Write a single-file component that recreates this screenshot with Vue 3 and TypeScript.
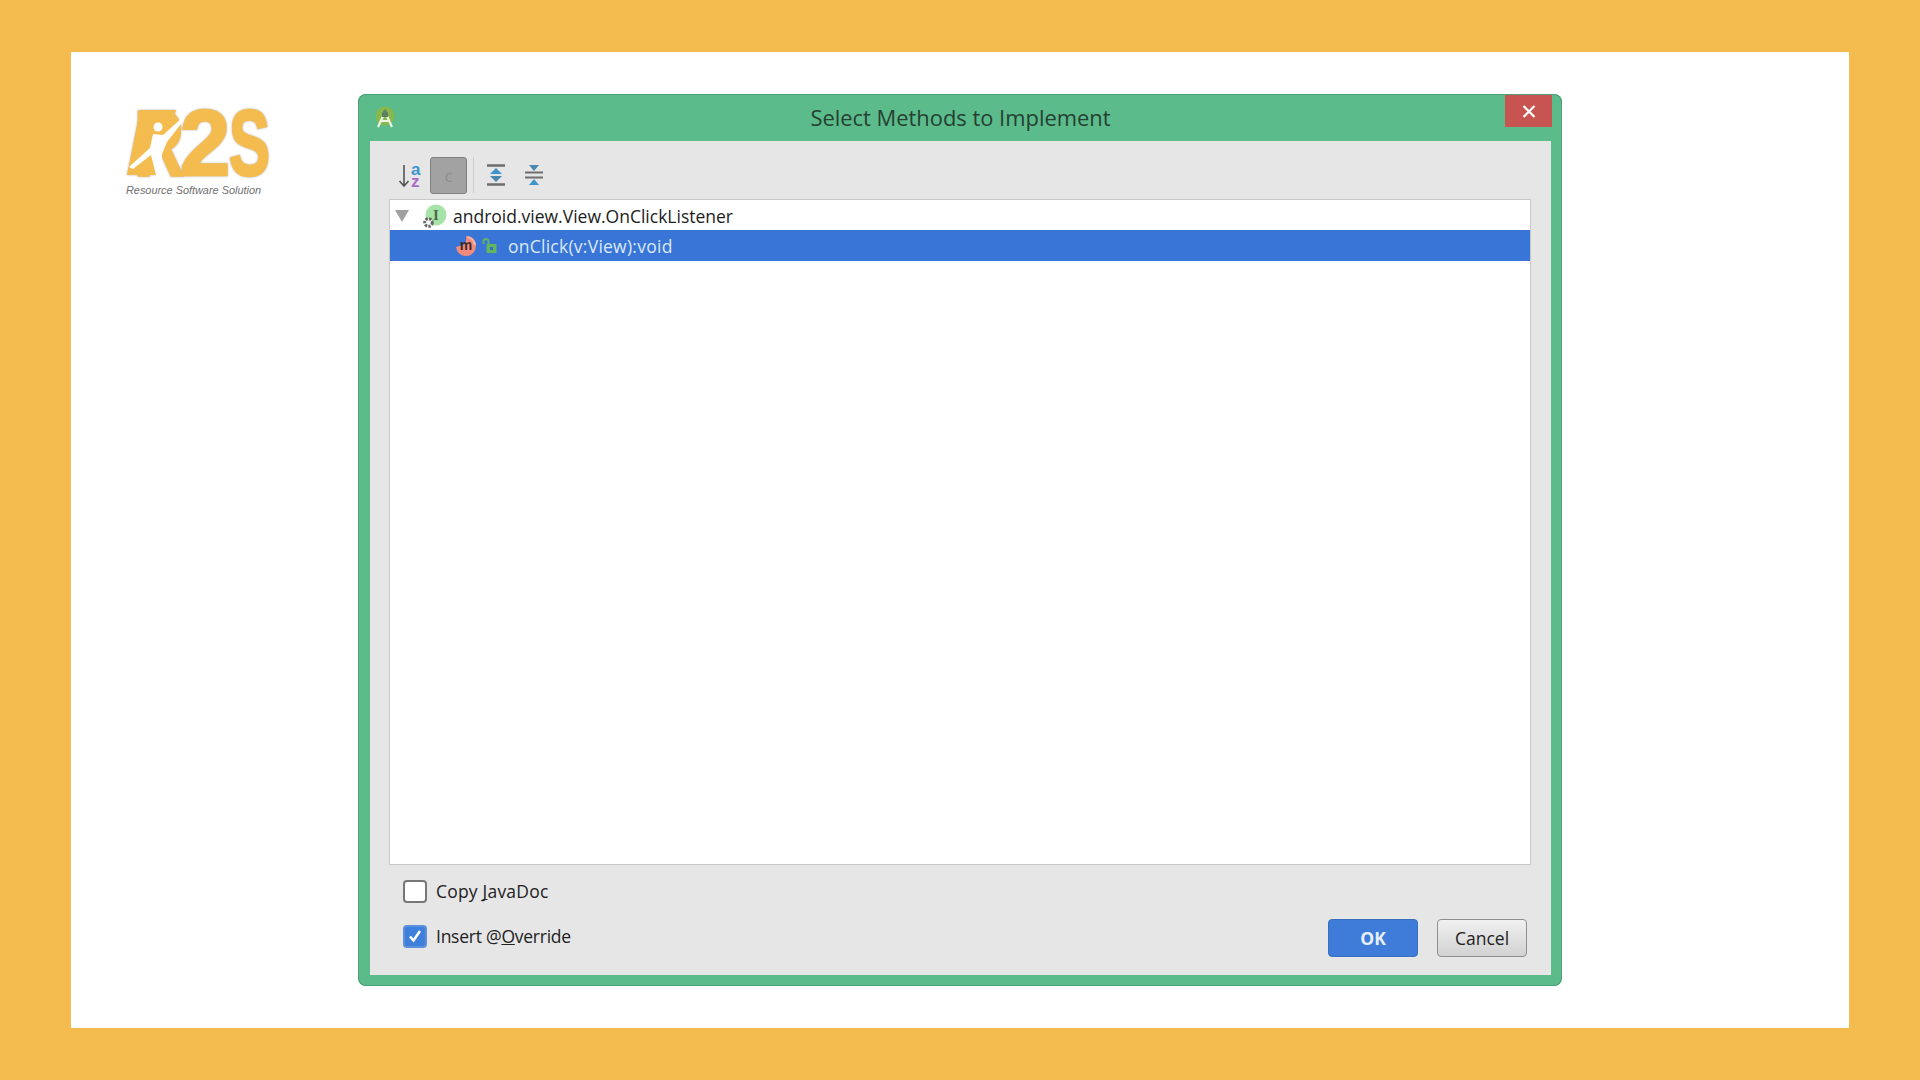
<template>
  <div class="page">
    <div class="sheet">
      <div class="brand">
        <svg class="brand-mark" width="146" height="70" viewBox="0 0 146 70">
          <g class="brand-letters">
            <path d="M14 3 H50 L30 68 H1 Z" fill="#f4bc4f" />
            <text x="8" y="68" class="brand-letter" textLength="50" lengthAdjust="spacingAndGlyphs">R</text>
            <text x="54" y="68" class="brand-letter" textLength="50" lengthAdjust="spacingAndGlyphs">2</text>
            <text x="103" y="68" class="brand-letter" textLength="41" lengthAdjust="spacingAndGlyphs">S</text>
          </g>
          <g fill="#fff">
            <circle cx="32" cy="20" r="4.500" />
            <path d="M27 27 L37 28 L56 11 L58 13 L41 35 L36 47 L36 68 L30 68 L25 48 L7 62 L3 60 L24 41 Z" />
          </g>
        </svg>
        <div class="brand-name">Resource Software Solution</div>
      </div>

      <div class="dialog">
        <div class="titlebar">
          <svg class="app-icon" width="20" height="23" viewBox="0 0 20 23">
            <circle cx="10" cy="10" r="9.500" fill="#86b84e" />
            <path d="M9 8 L3 21 M11 8 L17 21 M6 15 H14" fill="none" stroke="#eef4e4" stroke-width="2.200" />
            <path d="M10 3 L13 7 V11 H7 V7 Z" fill="#5f7f63" />
          </svg>
          <div class="title">Select Methods to Implement</div>
          <div class="close">
            <svg width="14" height="13" viewBox="0 0 14 13">
              <path d="M1.500 1 L12.500 12 M12.500 1 L1.500 12" stroke="#fff" stroke-width="2.200" />
            </svg>
          </div>
        </div>

        <div class="body">
          <div class="toolbar">
            <svg class="tool-sort" width="24" height="26" viewBox="0 0 24 26">
              <path d="M6 3 V24 M1.500 19 L6 24 L10.500 19" fill="none" stroke="#555" stroke-width="1.600" />
              <text x="13" y="13" class="sort-a">a</text>
              <text x="13" y="25" class="sort-z">z</text>
            </svg>
            <div class="toggle"><span>c</span></div>
            <div class="sep"></div>
            <svg class="tool-expand" width="20" height="22" viewBox="0 0 20 22">
              <path d="M1 1.500 H19 M1 20.500 H19" stroke="#6e6e6e" stroke-width="2.400" />
              <path d="M10 4 L16 10 H4 Z" fill="#3d95cc" />
              <path d="M10 18 L4 12 H16 Z" fill="#4a88b0" />
            </svg>
            <svg class="tool-collapse" width="20" height="22" viewBox="0 0 20 22">
              <path d="M1 8.500 H19 M1 13.500 H19" stroke="#6e6e6e" stroke-width="2" />
              <path d="M10 7 L5 1 H15 Z" fill="#4a88b0" />
              <path d="M10 15 L15 21 H5 Z" fill="#3d95cc" />
            </svg>
          </div>

          <div class="tree">
            <div class="row first">
              <span class="arrow"></span>
              <svg class="row-icon" width="24" height="24" viewBox="0 0 24 24">
                <circle cx="13" cy="11" r="10.500" fill="#a6e3a6" />
                <text x="13" y="16" class="icon-i">I</text>
                <circle cx="5.500" cy="18.500" r="3.800" fill="#fff" stroke="#666" stroke-width="3" stroke-dasharray="2.400 1.200" />
              </svg>
              <span class="row-text">{{ rootName }}</span>
            </div>
            <div class="row selected">
              <svg class="method-icon" width="22" height="22" viewBox="0 0 22 22">
                <path d="M11 1 A10 10 0 1 1 1 12 L8 10 Q12 8 11 1 Z" fill="#f58a7c" />
                <path d="M12.500 2 A9 9 0 0 1 20 10" fill="none" stroke="#f9b8a8" stroke-width="2" />
                <text x="11" y="15" class="icon-m">m</text>
              </svg>
              <svg class="lock-icon" width="15" height="16" viewBox="0 0 15 16">
                <path d="M1.500 6 V3.500 A2.500 2.500 0 0 1 6.500 3.500 V6" fill="none" stroke="#64b45f" stroke-width="1.800" />
                <rect x="4.500" y="6" width="10" height="9" fill="#64b45f" />
                <rect x="8" y="9" width="3" height="3" fill="#2f6fc8" />
              </svg>
              <span class="row-text">{{ methodName }}</span>
            </div>
          </div>

          <div class="footer">
            <div class="options">
              <label class="option copy">
                <span class="box"></span>
                <span>Copy <u>J</u>avaDoc</span>
              </label>
              <label class="option insert">
                <span class="box checked">
                  <svg width="16" height="16" viewBox="0 0 16 16">
                    <path d="M3 8.500 L6.500 12.500 L13 3" fill="none" stroke="#fff" stroke-width="2.600" />
                  </svg>
                </span>
                <span>Insert @<u>O</u>verride</span>
              </label>
            </div>
            <div class="actions">
              <button class="btn primary">OK</button>
              <button class="btn">Cancel</button>
            </div>
          </div>
        </div>
      </div>
    </div>
  </div>
</template>

<script setup lang="ts">
const rootName: string = 'android.view.View.OnClickListener'
const methodName: string = 'onClick(v:View):void'
</script>

<style>
html,
body {
  margin: 0;
  background: #f4bc4f;
}
</style>

<style scoped>
.page {
  box-sizing: border-box;
  width: 1920px;
  height: 1080px;
  padding: 52px 71px;
  background: #f4bc4f;
  font-family: "Open Sans", "Noto Sans", sans-serif;
}

.sheet {
  display: flex;
  align-items: flex-start;
  height: 976px;
  background: #fff;
  padding: 42px 0 0 54px;
  box-sizing: border-box;
}

.brand {
  width: 233px;
  padding-top: 13px;
}

.brand-mark {
  display: block;
  margin-left: 1px;
  overflow: visible;
}

.brand-letters {
  filter: drop-shadow(0 0 1px #b5b5b5);
}

.brand-letter {
  font-family: "Liberation Sans", sans-serif;
  font-weight: 700;
  font-size: 92px;
  fill: #f4bc4f;
  stroke: #f4bc4f;
  stroke-width: 2.500;
}

.brand-name {
  margin: 7px 0 0 1px;
  font-family: "Liberation Sans", sans-serif;
  font-style: italic;
  font-size: 10.900px;
  color: #707070;
  white-space: nowrap;
}

.dialog {
  box-sizing: border-box;
  width: 1204px;
  height: 892px;
  padding: 0 11px 11px 12px;
  background: #5bbb8a;
  border-radius: 8px;
  box-shadow: inset 0 0 0 1px #4c9f76;
  display: flex;
  flex-direction: column;
}

.titlebar {
  height: 47px;
  flex: none;
  display: grid;
  grid-template-columns: 1fr auto 1fr;
  align-items: center;
  position: relative;
}

.app-icon {
  margin-left: 5px;
}

.title {
  font-size: 21.900px;
  color: #263f33;
  white-space: nowrap;
}

.close {
  position: absolute;
  top: 1px;
  right: -1px;
  width: 47px;
  height: 32px;
  background: #c75450;
  display: flex;
  align-items: center;
  justify-content: center;
}

.body {
  flex: 1;
  display: flex;
  flex-direction: column;
  background: #e6e6e6;
  padding: 0 20px 0 19px;
  min-height: 0;
}

.toolbar {
  box-sizing: border-box;
  height: 58px;
  padding-top: 10px;
  flex: none;
  display: flex;
  align-items: center;
}

.tool-sort {
  margin-left: 9px;
  overflow: visible;
}

.toggle {
  box-sizing: border-box;
  width: 37px;
  height: 37px;
  margin-left: 8px;
  background: #a2a2a2;
  border: 1px solid #808080;
  border-radius: 3px;
  display: flex;
  align-items: center;
  justify-content: center;
  color: #8d8d8d;
  font-size: 17px;
}

.sep {
  width: 1px;
  height: 36px;
  margin-left: 6px;
  background: #cfcfcf;
}

.tool-expand {
  margin-left: 12px;
}

.tool-collapse {
  margin-left: 18px;
}

.tree {
  box-sizing: border-box;
  height: 666px;
  flex: none;
  background: #fff;
  border: 1px solid #c8c8c8;
  font-size: 17.500px;
  color: #1c1c1c;
}

.row {
  height: 31px;
  display: flex;
  align-items: center;
}

.first {
  box-sizing: border-box;
  height: 30px;
  padding-top: 1px;
}

.arrow {
  width: 0;
  height: 0;
  margin-left: 5px;
  border-left: 7px solid transparent;
  border-right: 7px solid transparent;
  border-top: 12px solid #a0a0a0;
}

.row-icon {
  margin-left: 14px;
}

.row-text {
  margin-left: 6px;
  white-space: nowrap;
}

.selected {
  background: #3875d7;
  color: #dbe8fa;
}

.method-icon {
  margin-left: 65px;
}

.lock-icon {
  margin-left: 5px;
}

.selected .row-text {
  margin-left: 11px;
  letter-spacing: 0.250px;
}

.icon-i {
  font-family: "Liberation Serif", serif;
  font-size: 15px;
  font-weight: 700;
  fill: #4a6a50;
  text-anchor: middle;
}

.icon-m {
  font-family: "Liberation Sans", sans-serif;
  font-size: 14px;
  font-weight: 700;
  fill: #3a2a2a;
  text-anchor: middle;
}

.sort-a,
.sort-z {
  font-family: "Liberation Sans", sans-serif;
  font-size: 17px;
  font-weight: 700;
}

.sort-a {
  fill: #3d95cc;
}

.sort-z {
  fill: #a66bc9;
}

.footer {
  flex: 1;
  display: flex;
  justify-content: space-between;
  align-items: flex-end;
  padding: 0 4px 18px 14px;
}

.options {
  display: flex;
  flex-direction: column;
  gap: 20px;
  padding-bottom: 9px;
}

.option {
  display: flex;
  align-items: center;
  gap: 9px;
  height: 24px;
  font-size: 17.500px;
  color: #222;
}

.option u {
  text-decoration-skip-ink: none;
}

.copy {
  letter-spacing: 0.200px;
  position: relative;
  top: -1px;
}

.insert {
  letter-spacing: -0.250px;
}

.box {
  box-sizing: border-box;
  width: 24px;
  height: 23px;
  background: #fff;
  border: 2px solid #777;
  border-radius: 4px;
  display: flex;
  align-items: center;
  justify-content: center;
}

.box.checked {
  background: #3f7fdc;
  border-color: #5c8fdc;
}

.actions {
  display: flex;
  gap: 19px;
}

.btn {
  box-sizing: border-box;
  width: 90px;
  height: 38px;
  padding: 0;
  font-family: inherit;
  font-size: 17.500px;
  color: #222;
  background: linear-gradient(#f0f0f0, #d2d2d2);
  border: 1px solid #8f8f8f;
  border-radius: 4px;
}

.btn.primary {
  background: #3f7bd8;
  border-color: #3a6fbf;
  color: #e6effb;
  font-weight: 700;
}
</style>
